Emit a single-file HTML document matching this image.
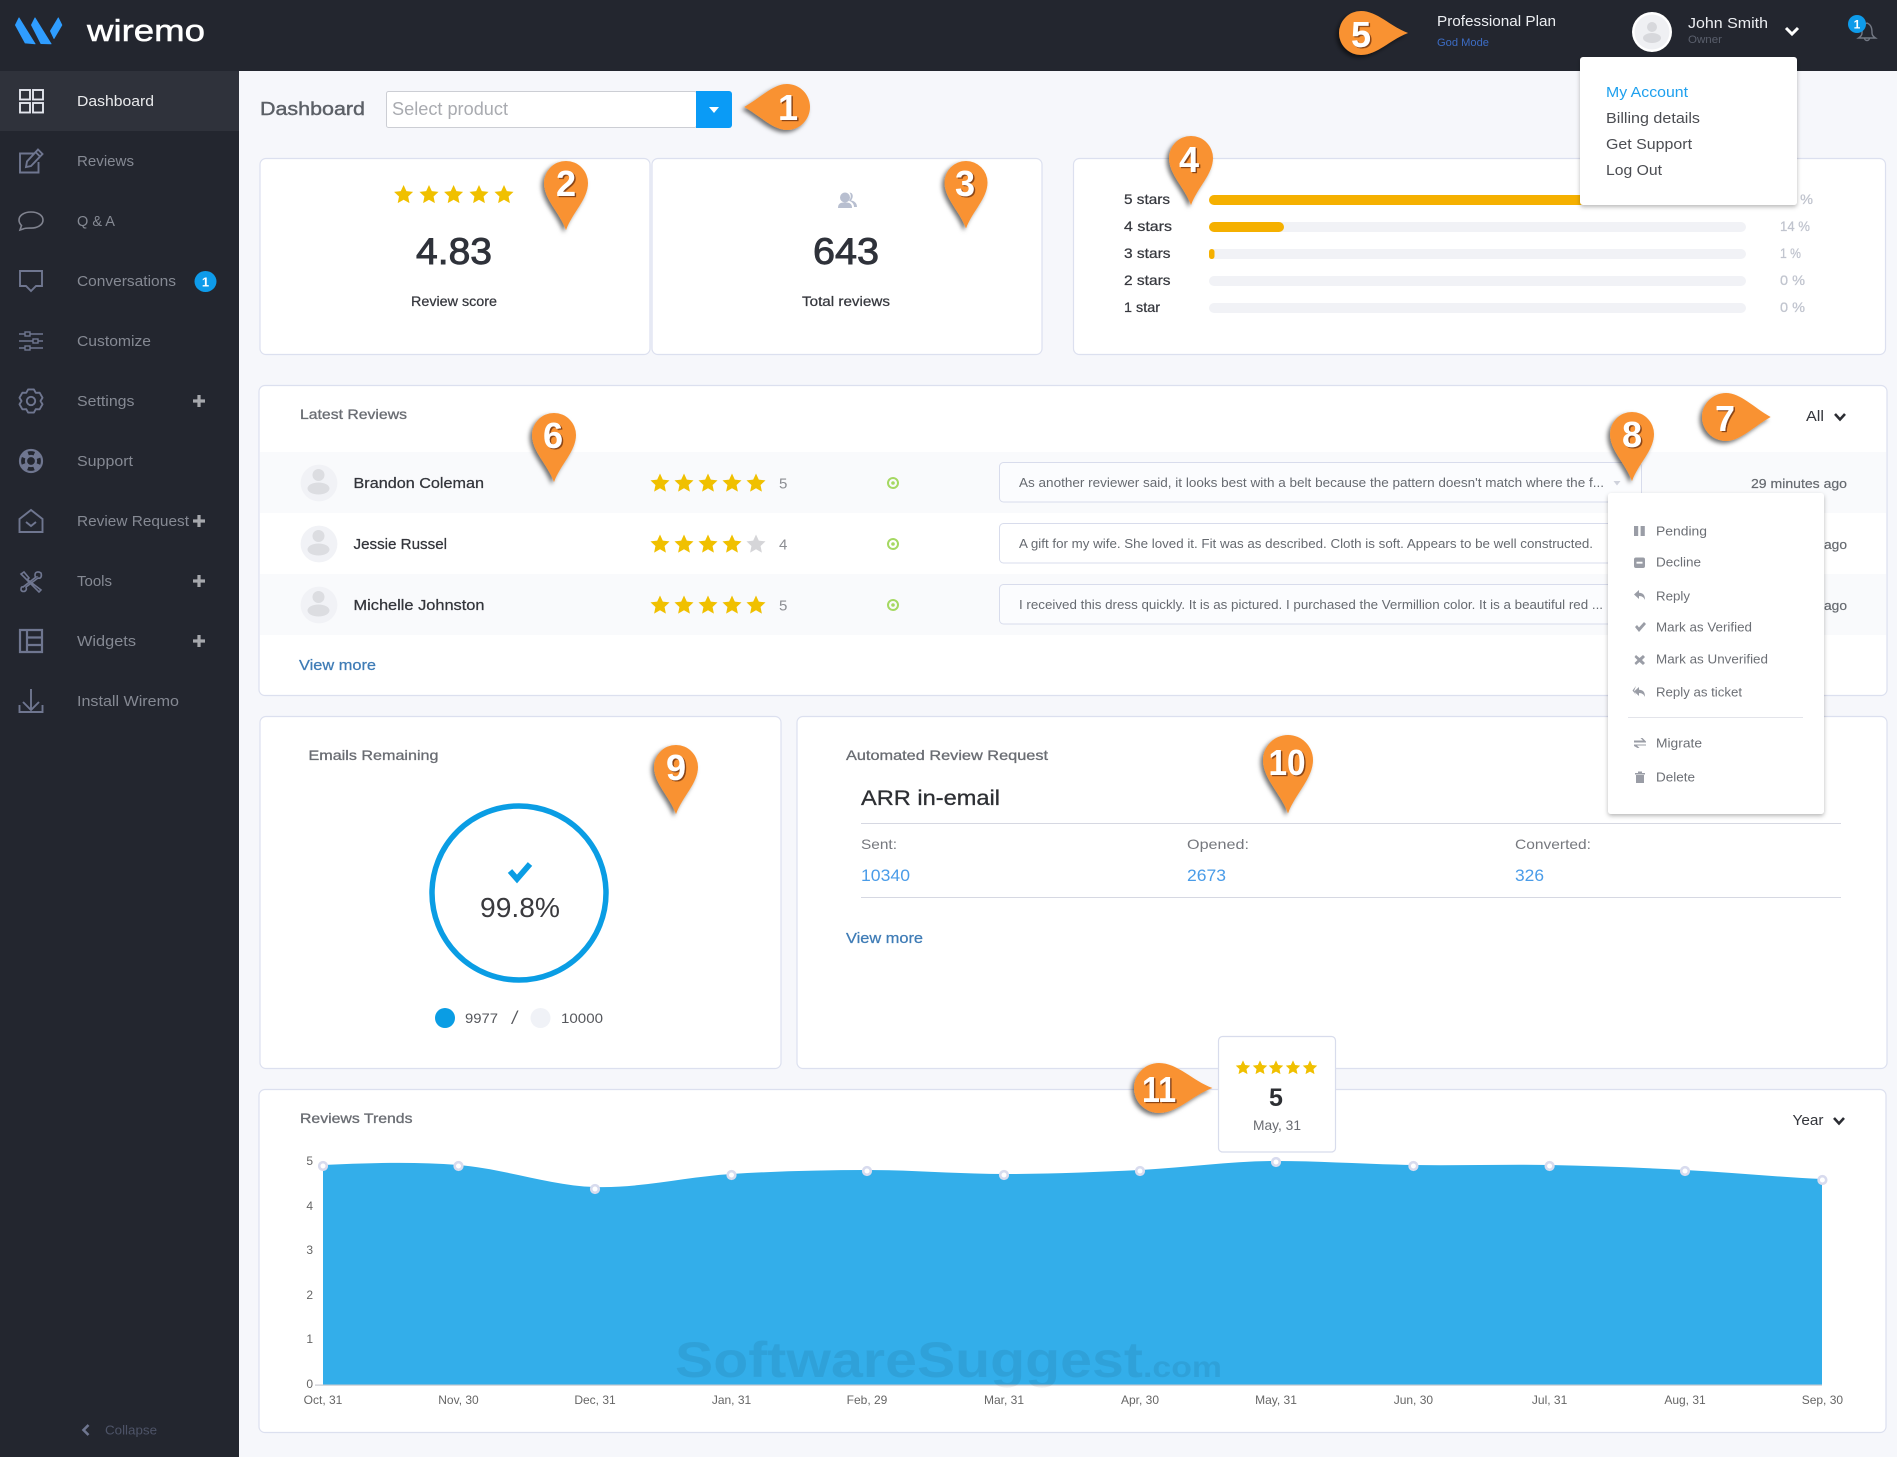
<!DOCTYPE html>
<html lang="en">
<head>
<meta charset="utf-8">
<title>Wiremo Dashboard</title>
<style>
html,body{margin:0;padding:0;background:#f6f7fb;width:1897px;height:1457px;overflow:hidden}
svg{display:block}
text{font-family:"Liberation Sans",Arial,sans-serif;white-space:pre}
.nav{font-size:14.5px;fill:#858993}
.hd{font-size:14px;fill:#6a6d73;stroke:#6a6d73;stroke-width:.3px}
.nm{font-size:14.5px;fill:#33353b;stroke:#33353b;stroke-width:.25px}
.rv{font-size:13px;fill:#666a70}
.mi{font-size:12.5px;fill:#6c6f75}
.um{font-size:14.5px;fill:#4b4d52}
.st{font-size:14px;fill:#37393f;stroke:#37393f;stroke-width:.25px}
.pc{font-size:14px;fill:#c0c4ce;stroke:#c0c4ce;stroke-width:.25px}
.lk{font-size:14.5px;fill:#3f7cb6;stroke:#3f7cb6;stroke-width:.25px}
.ax{font-size:12px;fill:#666}
.pn{font-size:36px;font-weight:bold;fill:#fff;text-anchor:middle}
.ic{fill:none;stroke:#6f7690;stroke-width:1.9}
.card{fill:#fff;stroke:#dce0ef;stroke-width:1.2}
.mic{fill:#9a9da6}
</style>
</head>
<body>
<svg xmlns="http://www.w3.org/2000/svg" width="1897" height="1457" viewBox="0 0 1897 1457">
<defs>
<polygon id="s" points="0,-1 .282,-.388 .951,-.309 .456,.148 .588,.809 0,.48 -.588,.809 -.456,.148 -.951,-.309 -.282,-.388"/>
<path id="pinA" d="M-1 0A1 1 0 1 1 1 0C1 .75 .28 1.35 0 2.14C-.28 1.35 -1 .75 -1 0Z"/>
<path id="pinB" d="M-1 0A1 1 0 1 1 1 0C1 .6 .4 1.15 0 1.86C-.4 1.15 -1 .6 -1 0Z"/>
<filter id="ps" x="-40%" y="-40%" width="180%" height="180%"><feDropShadow dx="-2.5" dy="2.5" stdDeviation="2" flood-color="#000" flood-opacity=".55"/></filter>
<filter id="ts" x="-30%" y="-30%" width="170%" height="170%"><feDropShadow dx="1.5" dy="1.2" stdDeviation=".3" flood-color="#8a4512" flood-opacity="1"/></filter>
<filter id="ms" x="-10%" y="-10%" width="120%" height="120%"><feDropShadow dx="0" dy="2" stdDeviation="2" flood-color="#000" flood-opacity=".28"/></filter>
</defs>

<!-- page -->
<rect width="1897" height="1457" fill="#f6f7fb"/>

<!-- header + sidebar -->
<rect x="0" y="0" width="1897" height="71" fill="#23262f"/>
<rect x="0" y="71" width="239" height="1386" fill="#23262f"/>
<rect x="0" y="71" width="239" height="60" fill="#2f323b"/>

<!-- logo -->
<g fill="#2f9dff" stroke="#2f9dff" stroke-width=".8" stroke-linejoin="round">
<polygon points="19,17.8 15.4,25 25.2,43 35.2,43.9"/>
<polygon points="35,17.8 31.4,25 40.9,43.6 51.2,43.9"/>
<polygon points="58.3,17.8 61.9,25 54,38.6 50.4,31"/>
</g>
<text x="87" y="41" font-size="31" fill="#fff" stroke="#fff" stroke-width=".5" textLength="118" lengthAdjust="spacingAndGlyphs">wiremo</text>

<!-- sidebar nav -->
<g>
<g fill="none" stroke="#e4e6ee" stroke-width="1.9">
<rect x="20" y="90" width="10" height="9.5"/><rect x="33" y="90" width="10" height="9.5"/>
<rect x="20" y="103" width="10" height="9.5"/><rect x="33" y="103" width="10" height="9.5"/>
</g>
<text x="77" y="106" class="nav" style="fill:#e9eaec" textLength="77" lengthAdjust="spacingAndGlyphs">Dashboard</text>

<path class="ic" d="M34 153.5H20V172.5H38.5V162"/>
<path class="ic" d="M38 149.5L42.5 154L31 166L26 167L27 161.5Z M35.5 152L40 156.5"/>
<text x="77" y="166" class="nav" textLength="57" lengthAdjust="spacingAndGlyphs">Reviews</text>

<path class="ic" style="stroke:#80838f;stroke-width:1.6" d="M31 212C38 212 43 215.5 43 220C43 225 37 228.5 30 228C27 228 25 228 23 229L20 230L21.5 225.5C20 224 19 222 19 220C19 215.5 24 212 31 212Z"/>
<text x="77" y="226" class="nav" textLength="38" lengthAdjust="spacingAndGlyphs">Q &amp; A</text>

<path class="ic" d="M20 271H42V286H36L31 291L26 286H20Z"/>
<text x="77" y="286" class="nav" textLength="99" lengthAdjust="spacingAndGlyphs">Conversations</text>
<ellipse cx="205.5" cy="281.5" rx="11" ry="10.5" fill="#0e9bea"/>
<text x="205.5" y="286.5" font-size="13" font-weight="bold" fill="#fff" text-anchor="middle">1</text>

<path class="ic" style="stroke-width:1.4" d="M19 334H43M19 341H43M19 348H43"/>
<g fill="#23262f" stroke="#6f7690" stroke-width="1.4"><rect x="25" y="332" width="5" height="4"/><rect x="33" y="339" width="5" height="4"/><rect x="25" y="346" width="5" height="4"/></g>
<text x="77" y="346" class="nav" textLength="74" lengthAdjust="spacingAndGlyphs">Customize</text>

<g transform="translate(31 401)"><polygon class="ic" stroke-linejoin="round" points="-2.9,-11.6 2.9,-11.6 4.75,-8.2 8.6,-8.3 11.5,-3.3 9.5,0 11.5,3.3 8.6,8.3 4.75,8.2 2.9,11.6 -2.9,11.6 -4.75,8.2 -8.6,8.3 -11.5,3.3 -9.5,0 -11.5,-3.3 -8.6,-8.3 -4.75,-8.2"/><circle class="ic" r="4.2"/></g>
<text x="77" y="406" class="nav" textLength="57.5" lengthAdjust="spacingAndGlyphs">Settings</text>
<path d="M199 395V407M193 401H205" stroke="#a6a8ad" stroke-width="3.2" fill="none"/>

<g fill="none" stroke="#6f7690"><circle cx="31" cy="461" r="11" stroke-width="2.2"/><circle cx="31" cy="461" r="5" stroke-width="2.2"/><circle cx="31" cy="461" r="8" stroke-width="5" stroke-dasharray="6.28 6.29" stroke-dashoffset="-3.14"/></g>
<text x="77" y="466" class="nav" textLength="56" lengthAdjust="spacingAndGlyphs">Support</text>

<path class="ic" d="M19.5 519L31 510L42.5 519V532H19.5Z M26 522L31 526L36 522"/>
<text x="77" y="526" class="nav" textLength="112" lengthAdjust="spacingAndGlyphs">Review Request</text>
<path d="M199 515V527M193 521H205" stroke="#a6a8ad" stroke-width="3.2" fill="none"/>

<g class="ic" style="stroke-width:1.6"><path d="M21 574L24 572L29 578L27 580Z M28 580L41 590L39 592L27 580"/><path d="M41 573C38 571 35 572 35 575C35 576 35 577 36 577L23 587C21 586 21 589 21 590C22 592 25 592 26 590C27 589 26 588 26 587L38 578C41 579 42 576 41 573Z"/></g>
<text x="77" y="586" class="nav" textLength="35" lengthAdjust="spacingAndGlyphs">Tools</text>
<path d="M199 575V587M193 581H205" stroke="#a6a8ad" stroke-width="3.2" fill="none"/>

<path class="ic" style="stroke-width:2.2" d="M20 630H42V652H20Z M27 630V652 M27 637.5H42 M27 645H42"/>
<text x="77" y="646" class="nav" textLength="59" lengthAdjust="spacingAndGlyphs">Widgets</text>
<path d="M199 635V647M193 641H205" stroke="#a6a8ad" stroke-width="3.2" fill="none"/>

<path class="ic" d="M31 689V710M23 702L31 710L39 702M19.5 705V712H42.5V705"/>
<text x="77" y="706" class="nav" textLength="102" lengthAdjust="spacingAndGlyphs">Install Wiremo</text>

<path d="M88.5 1425L83.5 1430L88.5 1435" fill="none" stroke="#6f7690" stroke-width="2.6"/>
<text x="105" y="1434.5" font-size="12.5" fill="#4e5468" textLength="52" lengthAdjust="spacingAndGlyphs">Collapse</text>
</g>

<!-- top right -->
<text x="1437" y="26" font-size="15" fill="#eceef2" textLength="119" lengthAdjust="spacingAndGlyphs">Professional Plan</text>
<text x="1437" y="46" font-size="11" fill="#3c6cc4" textLength="52" lengthAdjust="spacingAndGlyphs">God Mode</text>
<circle cx="1652" cy="32" r="20" fill="#fff"/>
<circle cx="1652" cy="32" r="17.5" fill="#eff0f3"/>
<circle cx="1652" cy="27" r="5" fill="#d7d8dc"/>
<ellipse cx="1652" cy="38" rx="9" ry="5" fill="#d7d8dc"/>
<text x="1688" y="28" font-size="15" fill="#eceef2" textLength="80" lengthAdjust="spacingAndGlyphs">John Smith</text>
<text x="1688" y="43" font-size="11" fill="#5a5f6c" textLength="34" lengthAdjust="spacingAndGlyphs">Owner</text>
<path d="M1786 28L1792 34L1798 28" fill="none" stroke="#fff" stroke-width="3"/>
<path d="M1867 23C1862 25 1862 30 1862 33C1862 36 1860 37 1858.5 38H1875.5C1874 37 1872 36 1872 33C1872 30 1872 25 1867 23Z M1864.5 38a2.5 2.5 0 0 0 5 0" fill="none" stroke="#737884" stroke-width="1.4"/>
<circle cx="1857" cy="24" r="9" fill="#0e9bea"/>
<text x="1857" y="28.5" font-size="12" font-weight="bold" fill="#fff" text-anchor="middle">1</text>

<!-- page header -->
<text x="260" y="115" font-size="18" fill="#5c6067" stroke="#5c6067" stroke-width=".4" textLength="105" lengthAdjust="spacingAndGlyphs">Dashboard</text>
<rect x="386.5" y="91.5" width="310" height="36" rx="2" fill="#fff" stroke="#ccced4"/>
<path d="M696 91H729a3 3 0 0 1 3 3V125a3 3 0 0 1 -3 3H696Z" fill="#0a9bf6"/>
<polygon points="709,107 719,107 714,113" fill="#fff"/>
<text x="392" y="115" font-size="18" fill="#a9abb0" textLength="116" lengthAdjust="spacingAndGlyphs">Select product</text>

<!-- stat cards -->
<rect class="card" x="260" y="158.5" width="390" height="196" rx="6"/>
<g fill="#f0c000">
<use href="#s" transform="translate(403.6 195) scale(10)"/>
<use href="#s" transform="translate(429 195) scale(10)"/>
<use href="#s" transform="translate(453.6 195) scale(10)"/>
<use href="#s" transform="translate(479 195) scale(10)"/>
<use href="#s" transform="translate(504 195) scale(10)"/>
</g>
<text x="416" y="264" font-size="37" fill="#2f323a" stroke="#2f323a" stroke-width=".9" textLength="76" lengthAdjust="spacingAndGlyphs">4.83</text>
<text x="411" y="306" class="st" style="font-size:13.5px" textLength="86" lengthAdjust="spacingAndGlyphs">Review score</text>

<rect class="card" x="652" y="158.5" width="390" height="196" rx="6"/>
<g fill="#b8bfd0">
<circle cx="845" cy="197.5" r="5"/>
<path d="M838 208C838 203 841 202.5 845 202.5C849 202.5 852 203 852 208Z"/>
<path d="M849.5 192.5C853 192.5 854 197 851 200.5C854.5 201 857 203 857 207H854C854 204 852 201.5 849 201C851 198 851.5 195 849.5 192.5Z"/>
</g>
<text x="813" y="264" font-size="37" fill="#2f323a" stroke="#2f323a" stroke-width=".9" textLength="66" lengthAdjust="spacingAndGlyphs">643</text>
<text x="802" y="306" class="st" style="font-size:13.5px" textLength="88" lengthAdjust="spacingAndGlyphs">Total reviews</text>

<rect class="card" x="1073.5" y="158.5" width="812" height="196" rx="6"/>
<text x="1124" y="204" class="st" textLength="46" lengthAdjust="spacingAndGlyphs">5 stars</text>
<text x="1124" y="231" class="st" textLength="48" lengthAdjust="spacingAndGlyphs">4 stars</text>
<text x="1124" y="258" class="st" textLength="46.5" lengthAdjust="spacingAndGlyphs">3 stars</text>
<text x="1124" y="285" class="st" textLength="46.5" lengthAdjust="spacingAndGlyphs">2 stars</text>
<text x="1124" y="312" class="st" textLength="36" lengthAdjust="spacingAndGlyphs">1 star</text>
<g fill="#f1f2f6">
<rect x="1209" y="195" width="537" height="10" rx="5"/>
<rect x="1209" y="222" width="537" height="10" rx="5"/>
<rect x="1209" y="249" width="537" height="10" rx="5"/>
<rect x="1209" y="276" width="537" height="10" rx="5"/>
<rect x="1209" y="303" width="537" height="10" rx="5"/>
</g>
<g fill="#f5b000">
<rect x="1209" y="195" width="456" height="10" rx="5"/>
<rect x="1209" y="222" width="75" height="10" rx="5"/>
<rect x="1209" y="249" width="5.5" height="10" rx="2.7"/>
</g>
<text x="1780" y="204" class="pc" textLength="33" lengthAdjust="spacingAndGlyphs">85 %</text>
<text x="1780" y="231" class="pc" textLength="30" lengthAdjust="spacingAndGlyphs">14 %</text>
<text x="1780" y="258" class="pc" textLength="21" lengthAdjust="spacingAndGlyphs">1 %</text>
<text x="1780" y="285" class="pc" textLength="25" lengthAdjust="spacingAndGlyphs">0 %</text>
<text x="1780" y="312" class="pc" textLength="25" lengthAdjust="spacingAndGlyphs">0 %</text>

<!-- Latest reviews -->
<rect class="card" x="259" y="385.5" width="1628" height="310" rx="6"/>
<text x="300" y="419" class="hd" textLength="107" lengthAdjust="spacingAndGlyphs">Latest Reviews</text>
<text x="1806" y="421" font-size="14.5" fill="#33353b" textLength="18" lengthAdjust="spacingAndGlyphs">All</text>
<path d="M1835 414L1840 419.5L1845 414" fill="none" stroke="#2b2d33" stroke-width="2.6"/>
<rect x="260" y="452" width="1626" height="61" fill="#f9fafc"/>
<rect x="260" y="574" width="1626" height="61" fill="#f9fafc"/>

<g>
<circle cx="319" cy="483" r="18.4" fill="#f1f2f6"/><circle cx="318.5" cy="475" r="6" fill="#dcdde1"/><ellipse cx="318.5" cy="488.5" rx="11" ry="6" fill="#dcdde1"/>
<text x="353.5" y="488" class="nm" textLength="130.5" lengthAdjust="spacingAndGlyphs">Brandon Coleman</text>
<g fill="#f0c000">
<use href="#s" transform="translate(660 483.5) scale(10)"/><use href="#s" transform="translate(684 483.5) scale(10)"/><use href="#s" transform="translate(708 483.5) scale(10)"/><use href="#s" transform="translate(732 483.5) scale(10)"/><use href="#s" transform="translate(756 483.5) scale(10)"/>
</g>
<text x="779" y="488.5" font-size="15" fill="#8b8d92">5</text>
<circle cx="893" cy="483" r="5" fill="none" stroke="#a5d862" stroke-width="2"/><circle cx="893" cy="483" r="1.8" fill="#a5d862"/>
<rect x="999.5" y="462.5" width="642" height="39.5" rx="4" fill="#fbfcfe" stroke="#d8dcec"/>
<text x="1019" y="487" class="rv" textLength="585" lengthAdjust="spacingAndGlyphs">As another reviewer said, it looks best with a belt because the pattern doesn't match where the f...</text>
<polygon points="1613.5,481 1620.5,481 1617,485.5" fill="#cfd2dc"/>
<text x="1751" y="488" class="rv" style="stroke:#666a70;stroke-width:.2px" textLength="96" lengthAdjust="spacingAndGlyphs">29 minutes ago</text>
</g>

<g>
<circle cx="319" cy="544" r="18.4" fill="#f1f2f6"/><circle cx="318.5" cy="536" r="6" fill="#dcdde1"/><ellipse cx="318.5" cy="549.5" rx="11" ry="6" fill="#dcdde1"/>
<text x="353.5" y="549" class="nm" textLength="93.5" lengthAdjust="spacingAndGlyphs">Jessie Russel</text>
<g fill="#f0c000">
<use href="#s" transform="translate(660 544.5) scale(10)"/><use href="#s" transform="translate(684 544.5) scale(10)"/><use href="#s" transform="translate(708 544.5) scale(10)"/><use href="#s" transform="translate(732 544.5) scale(10)"/>
<use href="#s" fill="#d5d5d8" transform="translate(756 544.5) scale(10)"/>
</g>
<text x="779" y="549.5" font-size="15" fill="#8b8d92">4</text>
<circle cx="893" cy="544" r="5" fill="none" stroke="#a5d862" stroke-width="2"/><circle cx="893" cy="544" r="1.8" fill="#a5d862"/>
<rect x="999.5" y="523.5" width="642" height="39.5" rx="4" fill="#fff" stroke="#d8dcec"/>
<text x="1019" y="548" class="rv" textLength="574" lengthAdjust="spacingAndGlyphs">A gift for my wife. She loved it. Fit was as described. Cloth is soft. Appears to be well constructed.</text>
<text x="1824" y="549" class="rv" style="stroke:#666a70;stroke-width:.2px" textLength="23" lengthAdjust="spacingAndGlyphs">ago</text>
</g>

<g>
<circle cx="319" cy="605" r="18.4" fill="#f1f2f6"/><circle cx="318.5" cy="597" r="6" fill="#dcdde1"/><ellipse cx="318.5" cy="610.5" rx="11" ry="6" fill="#dcdde1"/>
<text x="353.5" y="610" class="nm" textLength="131" lengthAdjust="spacingAndGlyphs">Michelle Johnston</text>
<g fill="#f0c000">
<use href="#s" transform="translate(660 605.5) scale(10)"/><use href="#s" transform="translate(684 605.5) scale(10)"/><use href="#s" transform="translate(708 605.5) scale(10)"/><use href="#s" transform="translate(732 605.5) scale(10)"/><use href="#s" transform="translate(756 605.5) scale(10)"/>
</g>
<text x="779" y="610.5" font-size="15" fill="#8b8d92">5</text>
<circle cx="893" cy="605" r="5" fill="none" stroke="#a5d862" stroke-width="2"/><circle cx="893" cy="605" r="1.8" fill="#a5d862"/>
<rect x="999.5" y="584.5" width="642" height="39.5" rx="4" fill="#fbfcfe" stroke="#d8dcec"/>
<text x="1019" y="609" class="rv" textLength="584" lengthAdjust="spacingAndGlyphs">I received this dress quickly. It is as pictured. I purchased the Vermillion color. It is a beautiful red ...</text>
<text x="1824" y="610" class="rv" style="stroke:#666a70;stroke-width:.2px" textLength="23" lengthAdjust="spacingAndGlyphs">ago</text>
</g>
<text x="299" y="670" class="lk" textLength="77" lengthAdjust="spacingAndGlyphs">View more</text>

<!-- Emails remaining -->
<rect class="card" x="260" y="716.5" width="521" height="352" rx="6"/>
<text x="308.5" y="760" class="hd" textLength="130" lengthAdjust="spacingAndGlyphs">Emails Remaining</text>
<circle cx="519" cy="893" r="87" fill="none" stroke="#0a9de4" stroke-width="5.5"/>
<path d="M510 871L517 879L530 864" fill="none" stroke="#0a9de4" stroke-width="5.8"/>
<text x="480" y="917" font-size="28" fill="#3a3a3e" textLength="80" lengthAdjust="spacingAndGlyphs">99.8%</text>
<circle cx="445" cy="1018" r="10" fill="#0a9de4"/>
<text x="465" y="1023" font-size="14" fill="#55575c" textLength="33" lengthAdjust="spacingAndGlyphs">9977</text>
<text x="512" y="1024" font-size="18" fill="#55575c" font-style="italic">/</text>
<circle cx="540.5" cy="1018" r="10" fill="#f0f2f7"/>
<text x="561" y="1023" font-size="14" fill="#55575c" textLength="42" lengthAdjust="spacingAndGlyphs">10000</text>

<!-- ARR -->
<rect class="card" x="797" y="716.5" width="1090" height="352" rx="6"/>
<text x="846" y="760" class="hd" textLength="202" lengthAdjust="spacingAndGlyphs">Automated Review Request</text>
<text x="861" y="805" font-size="21" fill="#2d2f33" stroke="#2d2f33" stroke-width=".3" textLength="139" lengthAdjust="spacingAndGlyphs">ARR in-email</text>
<rect x="861" y="823" width="980" height="1" fill="#d6d8e2"/>
<text x="861" y="849" font-size="14" fill="#76787e" textLength="36" lengthAdjust="spacingAndGlyphs">Sent:</text>
<text x="1187" y="849" font-size="14" fill="#76787e" textLength="62" lengthAdjust="spacingAndGlyphs">Opened:</text>
<text x="1515" y="849" font-size="14" fill="#76787e" textLength="76" lengthAdjust="spacingAndGlyphs">Converted:</text>
<text x="861" y="881" font-size="17" fill="#4a9ce8" textLength="49" lengthAdjust="spacingAndGlyphs">10340</text>
<text x="1187" y="881" font-size="17" fill="#4a9ce8" textLength="39" lengthAdjust="spacingAndGlyphs">2673</text>
<text x="1515" y="881" font-size="17" fill="#4a9ce8" textLength="29" lengthAdjust="spacingAndGlyphs">326</text>
<rect x="861" y="897" width="980" height="1" fill="#d6d8e2"/>
<text x="846" y="943" class="lk" textLength="77" lengthAdjust="spacingAndGlyphs">View more</text>

<!-- Trends -->
<rect class="card" x="259" y="1089.5" width="1627" height="343" rx="6"/>
<text x="300" y="1123" class="hd" textLength="112.5" lengthAdjust="spacingAndGlyphs">Reviews Trends</text>
<text x="1792.5" y="1125" font-size="14.5" fill="#33353b" textLength="31" lengthAdjust="spacingAndGlyphs">Year</text>
<path d="M1834 1118L1839 1123.5L1844 1118" fill="none" stroke="#2b2d33" stroke-width="2.6"/>

<g class="ax" text-anchor="end">
<text x="313" y="1165">5</text><text x="313" y="1210">4</text><text x="313" y="1254">3</text><text x="313" y="1299">2</text><text x="313" y="1343">1</text><text x="313" y="1388">0</text>
</g>
<path d="M323 1165C368 1163 413 1161.5 458.5 1165C504 1168.6 549.5 1185.6 595 1187C640.5 1188.4 686 1176.8 731.5 1174C777 1171.2 822 1170 867 1170C912 1170 958 1174 1004 1174C1049 1174 1095 1172.2 1140 1170C1185 1167.8 1231 1161 1276 1161C1321 1161 1367 1164.3 1413 1165C1459 1165.7 1505 1164.2 1550 1165C1595 1165.8 1640 1167.7 1685 1170C1730 1172.3 1777 1177 1822 1179V1385H323Z" fill="#33aeea"/>
<rect x="315" y="1384.5" width="1507" height="1.2" fill="#c8cad0"/>
<g fill="#fff" stroke="#d8dbee" stroke-width="2.6">
<circle cx="323" cy="1166" r="3.8"/><circle cx="458.5" cy="1166" r="3.8"/><circle cx="595" cy="1189" r="3.8"/><circle cx="731.5" cy="1175" r="3.8"/><circle cx="867" cy="1171" r="3.8"/><circle cx="1004" cy="1175" r="3.8"/><circle cx="1140" cy="1171" r="3.8"/><circle cx="1276" cy="1162" r="3.8"/><circle cx="1413.4" cy="1166" r="3.8"/><circle cx="1549.6" cy="1166" r="3.8"/><circle cx="1685" cy="1171" r="3.8"/><circle cx="1822.4" cy="1180" r="3.8"/>
</g>
<g class="ax" text-anchor="middle">
<text x="323" y="1404">Oct, 31</text><text x="458.5" y="1404">Nov, 30</text><text x="595" y="1404">Dec, 31</text><text x="731.5" y="1404">Jan, 31</text><text x="867" y="1404">Feb, 29</text><text x="1004" y="1404">Mar, 31</text><text x="1140" y="1404">Apr, 30</text><text x="1276" y="1404">May, 31</text><text x="1413.4" y="1404">Jun, 30</text><text x="1549.6" y="1404">Jul, 31</text><text x="1685" y="1404">Aug, 31</text><text x="1822.4" y="1404">Sep, 30</text>
</g>
<text x="675" y="1377" font-size="50" font-weight="bold" fill="#000" fill-opacity=".07" textLength="468" lengthAdjust="spacingAndGlyphs">SoftwareSuggest</text>
<text x="1143" y="1377" font-size="30" font-weight="bold" fill="#000" fill-opacity=".07" textLength="79" lengthAdjust="spacingAndGlyphs">.com</text>

<!-- tooltip -->
<rect x="1218.5" y="1036.5" width="117" height="115.5" rx="4" fill="#fff" stroke="#d8dcec" stroke-width="1.2"/>
<g fill="#f0c000">
<use href="#s" transform="translate(1243 1068) scale(7.6)"/><use href="#s" transform="translate(1260 1068) scale(7.6)"/><use href="#s" transform="translate(1276 1068) scale(7.6)"/><use href="#s" transform="translate(1293 1068) scale(7.6)"/><use href="#s" transform="translate(1310 1068) scale(7.6)"/>
</g>
<text x="1276" y="1106" font-size="25" font-weight="bold" fill="#2d2f33" text-anchor="middle">5</text>
<text x="1253" y="1130" font-size="14" fill="#6a6c72" textLength="48" lengthAdjust="spacingAndGlyphs">May, 31</text>

<!-- user menu -->
<rect x="1580" y="57" width="217" height="148" rx="3" fill="#fff" filter="url(#ms)"/>
<text x="1606" y="97" class="um" style="fill:#1ea0ee" textLength="82" lengthAdjust="spacingAndGlyphs">My Account</text>
<text x="1606" y="123" class="um" textLength="94" lengthAdjust="spacingAndGlyphs">Billing details</text>
<text x="1606" y="149" class="um" textLength="86" lengthAdjust="spacingAndGlyphs">Get Support</text>
<text x="1606" y="175" class="um" textLength="56" lengthAdjust="spacingAndGlyphs">Log Out</text>

<!-- action menu -->
<rect x="1608" y="493" width="216" height="321" rx="3" fill="#fff" filter="url(#ms)"/>
<g class="mic">
<rect x="1634" y="526" width="4.2" height="10"/><rect x="1640.6" y="526" width="4.2" height="10"/>
<path d="M1636 557.5h7a2 2 0 0 1 2 2V566a2 2 0 0 1 -2 2h-7a2 2 0 0 1 -2 -2V559.5a2 2 0 0 1 2 -2ZM1636.5 561.8v1.8h6v-1.8Z" fill-rule="evenodd"/>
<path d="M1639 590L1634 594.5L1639 599V596C1642 596 1644 597.5 1645 600C1645 595 1643 593 1639 592.8Z"/>
<path d="M1635 627L1637 625L1639 627.5L1644 622L1646 624L1639 632Z"/>
<path d="M1636 655L1639.5 658L1643 655L1645 657L1642 660L1645 663L1643 665L1639.5 662L1636 665L1634.5 663L1637.5 660L1634.5 657Z"/>
<path d="M1639 687L1634 691.5L1639 696V693C1642 693 1644 694.5 1645 697C1645 692 1643 690 1639 689.8Z M1636 686L1632.5 690.5L1636 695L1634 691Z"/>
<path d="M1634 740.5H1643L1640.5 738H1642.5L1646 741.5V742.5H1634Z M1634 744.5H1646V745.5H1637L1639.5 748H1637.5L1634 746Z"/>
<path d="M1635 773H1645V774.5H1635Z M1638 771.5H1642V773H1638Z M1636 775H1644V783H1636Z"/>
</g>
<text x="1656" y="535.5" class="mi" textLength="51" lengthAdjust="spacingAndGlyphs">Pending</text>
<text x="1656" y="566.5" class="mi" textLength="45" lengthAdjust="spacingAndGlyphs">Decline</text>
<text x="1656" y="600.5" class="mi" textLength="34" lengthAdjust="spacingAndGlyphs">Reply</text>
<text x="1656" y="631.5" class="mi" textLength="96" lengthAdjust="spacingAndGlyphs">Mark as Verified</text>
<text x="1656" y="663.5" class="mi" textLength="112" lengthAdjust="spacingAndGlyphs">Mark as Unverified</text>
<text x="1656" y="696.5" class="mi" textLength="86" lengthAdjust="spacingAndGlyphs">Reply as ticket</text>
<rect x="1628" y="717" width="175" height="1" fill="#e3e4ea"/>
<text x="1656" y="747.5" class="mi" textLength="46" lengthAdjust="spacingAndGlyphs">Migrate</text>
<text x="1656" y="781.5" class="mi" textLength="39" lengthAdjust="spacingAndGlyphs">Delete</text>

<!-- callout pins -->
<g fill="#f99230">
<g filter="url(#ps)"><use href="#pinB" transform="translate(787 107) rotate(90) scale(23)"/></g>
<g filter="url(#ps)"><use href="#pinA" transform="translate(566 183) scale(22)"/></g>
<g filter="url(#ps)"><use href="#pinA" transform="translate(966 182.5) scale(21.5)"/></g>
<g filter="url(#ps)"><use href="#pinA" transform="translate(1191 158) scale(22)"/></g>
<g filter="url(#ps)"><use href="#pinA" transform="translate(1361 33) rotate(-90) scale(22)"/></g>
<g filter="url(#ps)"><use href="#pinA" transform="translate(554 435) scale(22)"/></g>
<g filter="url(#ps)"><use href="#pinB" transform="translate(1726 417) rotate(-90) scale(24)"/></g>
<g filter="url(#ps)"><use href="#pinA" transform="translate(1632 434) scale(22)"/></g>
<g filter="url(#ps)"><use href="#pinA" transform="translate(676 767) scale(22)"/></g>
<g filter="url(#ps)"><use href="#pinA" transform="translate(1288 760) scale(25)"/></g>
<g filter="url(#ps)"><use href="#pinA" transform="translate(1159 1088) rotate(-90) scale(25)"/></g>
</g>
<g class="pins" filter="url(#ts)">
<text class="pn" x="788" y="120">1</text>
<text class="pn" x="566" y="196">2</text>
<text class="pn" x="965" y="196">3</text>
<text class="pn" x="1189" y="172">4</text>
<text class="pn" x="1361" y="47">5</text>
<text class="pn" x="553" y="448">6</text>
<text class="pn" x="1725" y="431">7</text>
<text class="pn" x="1632" y="447">8</text>
<text class="pn" x="676" y="780">9</text>
<text class="pn" x="1287" y="775" textLength="37" lengthAdjust="spacingAndGlyphs">10</text>
<text class="pn" x="1159" y="1102" textLength="34" lengthAdjust="spacingAndGlyphs">11</text>
</g>
</svg>
</body>
</html>
